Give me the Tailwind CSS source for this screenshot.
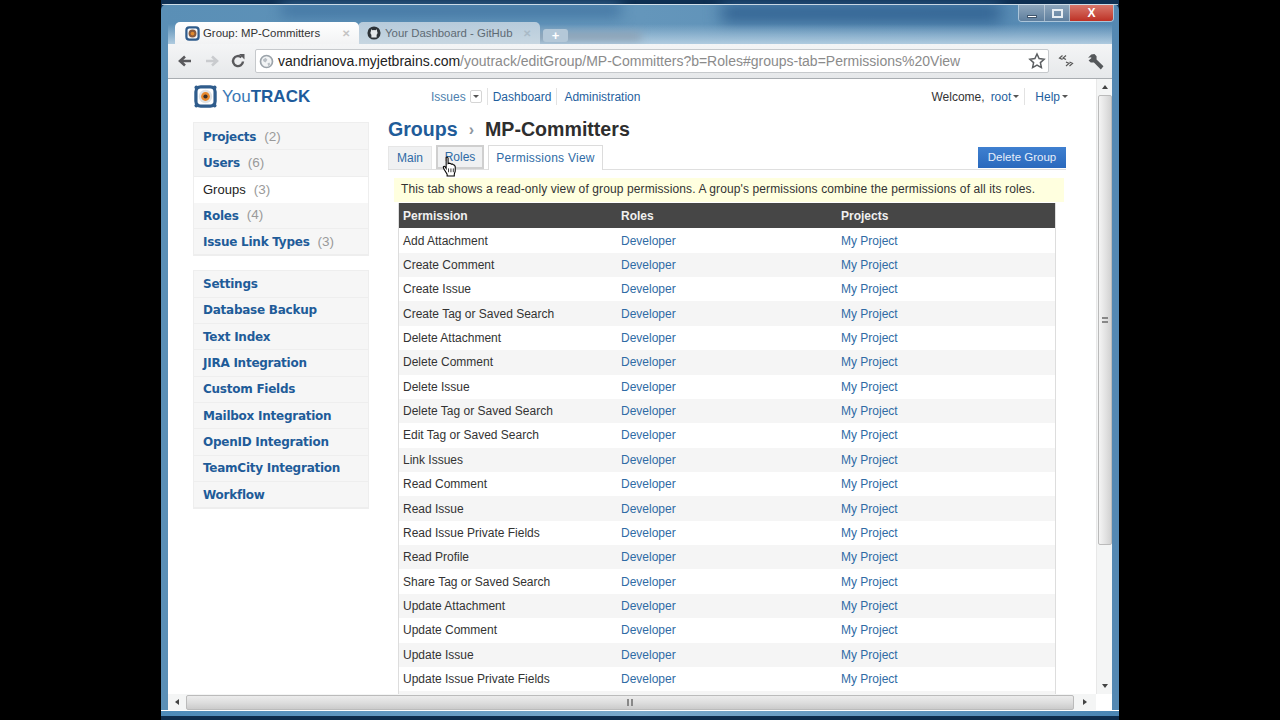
<!DOCTYPE html>
<html>
<head>
<meta charset="UTF-8">
<title>Group: MP-Committers</title>
<script src="https://cdn.jsdelivr.net/npm/@tailwindcss/browser@4"></script>
</head>
<body class="bg-black overflow-hidden font-['Liberation_Sans',sans-serif]">
<div class="w-[1280px] h-[720px] flex">
 <div class="w-[161px] bg-black"></div>
 <!-- window -->
 <div class="relative w-[958px] h-[720px] flex flex-col bg-[#0e2f52] pt-[4px] overflow-hidden">
  <!-- glass -->
  <div class="absolute left-0 right-0 top-[4px] h-[712px] rounded-t-[6px] bg-gradient-to-r from-[#5a8fb6] via-[#6496bb] to-[#5488b2]"></div>
  <div class="absolute left-[120px] top-[4px] w-[340px] h-[12px] bg-[#3f72a0] blur-[7px]"></div>
  <div class="absolute left-[560px] top-[4px] w-[280px] h-[18px] bg-[#2f6090] blur-[8px]"></div>
  <div class="absolute left-[7px] right-[7px] top-[24px] h-[20px] bg-gradient-to-b from-transparent to-[#b9d2e4]/90"></div>
  <div class="absolute left-[240px] top-[33px] w-[240px] h-[7px] bg-[#8d9dae] blur-[4px]"></div>
  <div class="absolute left-[1px] right-[1px] top-[4px] h-[1px] bg-white/70"></div>

  <!-- window buttons -->
  <div class="absolute top-[5px] right-[5px] z-10 h-[17px] flex rounded-b-[4px] overflow-hidden border border-t-0 border-white/50">
   <div class="w-[26px] bg-gradient-to-b from-[#8ea6bc] to-[#5f7f9e] border-r border-white/40 flex items-end justify-center pb-[3px]"><div class="w-[10px] h-[3px] bg-white border border-[#40566d]"></div></div>
   <div class="w-[25px] bg-gradient-to-b from-[#8ea6bc] to-[#5f7f9e] border-r border-white/40 flex items-center justify-center"><div class="w-[11px] h-[9px] bg-transparent border-2 border-[#e8eef3]"></div></div>
   <div class="w-[43px] bg-gradient-to-b from-[#d9766b] to-[#bd2f24] flex items-center justify-center text-white text-[12px] font-bold leading-none">X</div>
  </div>

  <!-- tabs -->
  <div class="relative h-[40px] shrink-0 pt-[18px] pl-[14px] flex items-end text-[11.4px]">
   <div class="relative z-10 w-[184px] h-[22px] bg-gradient-to-b from-white to-[#f2f3f4] rounded-t-[5px] flex items-center pl-[10px] text-[#333]">
    <svg class="w-[15px] h-[15px] mr-[3px] shrink-0" viewBox="0 0 16 16"><rect x="1.5" y="1.5" width="13" height="13" rx="3" fill="none" stroke="#2f5c8c" stroke-width="2.4"/><circle cx="8" cy="8" r="4.2" fill="#8a5a3c"/><circle cx="8" cy="8" r="2" fill="#e08a2e"/></svg>
    <span class="whitespace-nowrap pt-[1px]">Group: MP-Committers</span>
    <span class="ml-[22px] text-[#c4c4c4] font-bold text-[10px]">✕</span>
   </div>
   <div class="w-[182px] h-[22px] -ml-[1px] bg-gradient-to-b from-[#b7cbdb] to-[#c7d6e1] rounded-t-[5px] flex items-center pl-[9px] text-[#5e6a74]">
    <svg class="w-[14px] h-[14px] mr-[4px] shrink-0" viewBox="0 0 16 16"><circle cx="8" cy="8" r="7.5" fill="#2d3338"/><path d="M5 13V10C3.8 9 3.6 6.8 4.6 5.6V3.8L6.4 4.8a5 5 0 0 1 3.2 0L11.4 3.8V5.6C12.4 6.8 12.2 9 11 10V13Z" fill="#e4e8ea"/></svg>
    <span class="whitespace-nowrap pt-[1px]">Your Dashboard - GitHub</span>
    <span class="ml-[11px] text-[#a9bac7] font-bold text-[10px]">✕</span>
   </div>
   <div class="ml-[3px] mb-[2px] w-[25px] h-[13px] rounded-[3px] bg-[#b4c8d8] flex items-center justify-center text-white text-[13px] font-bold leading-none">+</div>
  </div>

  <!-- toolbar -->
  <div class="relative mx-[7px] h-[35px] shrink-0 bg-gradient-to-b from-[#f4f5f6] to-[#e6e8ea] border-b border-[#a9adb1] flex items-center pl-[9px]">
   <svg class="w-[16px] h-[16px] shrink-0" viewBox="0 0 16 16"><path d="M14 8H4M8 3.5L3 8l5 4.5" fill="none" stroke="#59595c" stroke-width="2.6"/></svg>
   <svg class="w-[16px] h-[16px] ml-[11px] shrink-0" viewBox="0 0 16 16"><path d="M2 8H12M8 3.5L13 8l-5 4.5" fill="none" stroke="#c9cbce" stroke-width="2.6"/></svg>
   <svg class="w-[16px] h-[16px] ml-[10px] shrink-0" viewBox="0 0 16 16"><path d="M13 8.5A5 5 0 1 1 11.4 4.4" fill="none" stroke="#59595c" stroke-width="2.4"/><path d="M9 1h5.5v5.5z" fill="#59595c"/></svg>
   <div class="ml-[9px] w-[794px] h-[24px] bg-white border border-[#c6c9cc] rounded-[2px] flex items-center pl-[3px]">
    <svg class="w-[15px] h-[15px] shrink-0" viewBox="0 0 16 16"><circle cx="8" cy="8" r="6.4" fill="#f2f4f5" stroke="#9ba3aa" stroke-width="1.8"/><path d="M4 6l3-2 2 2-2 3-2-1zM9 10l2-1 1 2-2 2z" fill="#b8bec4"/></svg>
    <span class="ml-[4px] text-[14px] whitespace-nowrap text-[#222]">vandrianova.myjetbrains.com<span class="text-[#8b8b8b]">/youtrack/editGroup/MP-Committers?b=Roles#groups-tab=Permissions%20View</span></span>
    <svg class="ml-auto mr-[2px] w-[18px] h-[18px] shrink-0" viewBox="0 0 18 18"><path d="M9 2l2.1 4.6 5 .6-3.7 3.4 1 5L9 13.1l-4.4 2.5 1-5L1.9 7.2l5-.6z" fill="#fff" stroke="#5c5f62" stroke-width="1.5"/></svg>
   </div>
   <svg class="ml-[9px] w-[16px] h-[16px] shrink-0" viewBox="0 0 16 16"><path d="M4.5 2.5L1.5 5l3 1.5M8 2.5L5 5l3 1.5" fill="none" stroke="#555" stroke-width="1.2"/><path d="M8 9l3 1.5L8 13M11.5 9l3 1.5-3 2.5" fill="none" stroke="#555" stroke-width="1.2"/></svg>
   <svg class="ml-[13px] w-[17px] h-[17px] shrink-0" viewBox="0 0 16 16"><path d="M1 4.5L4 1.5 7 1 9 3 9 6 15.5 12.5 13 15.5 6.5 9 3.5 9 1.5 7 4 5 4 4z" fill="#55585b"/></svg>
  </div>

  <!-- content + vertical scrollbar -->
  <div class="relative mx-[7px] flex-1 flex min-h-0 bg-white">
   <div class="flex-1 min-w-0 overflow-hidden">
    <!-- top nav -->
    <div class="h-[43px] flex relative text-[12px] text-[#1f5f9e]">
     <div class="ml-[26px] mt-[5px] flex items-center h-[24px]">
      <svg class="w-[23px] h-[23px]" viewBox="0 0 24 24"><rect x="2" y="2" width="20" height="20" rx="5" fill="none" stroke="#2f5c8c" stroke-width="3.4"/><circle cx="2.5" cy="2.5" r="2" fill="#2f5c8c"/><circle cx="21.5" cy="2.5" r="2" fill="#2f5c8c"/><circle cx="2.5" cy="21.5" r="2" fill="#2f5c8c"/><circle cx="21.5" cy="21.5" r="2" fill="#2f5c8c"/><circle cx="12" cy="12" r="7" fill="#dfe3e6"/><circle cx="12" cy="12" r="4.6" fill="#e8892c"/><circle cx="12" cy="12" r="2.2" fill="#39302a"/></svg>
      <span class="ml-[5px] text-[17px] leading-none text-[#3a78b5]">You<span class="font-bold text-[#1e5c9c]">TRACK</span></span>
     </div>
     <div class="absolute left-[263px] top-[9px] h-[17px] flex items-center">
      <span class="text-[#4d7fae]">Issues</span>
      <span class="ml-[4px] w-[12px] h-[13px] border border-[#d5d5d5] rounded-[2px] flex items-center justify-center"><span class="w-0 h-0 border-x-[3px] border-x-transparent border-t-[3px] border-t-[#555]"></span></span>
      <span class="ml-[5px] mr-[5px] w-px h-[17px] bg-[#e2e2e2]"></span>
      <span>Dashboard</span>
      <span class="ml-[5px] mr-[7px] w-px h-[17px] bg-[#e2e2e2]"></span>
      <span>Administration</span>
     </div>
     <div class="absolute right-[28px] top-[9px] h-[17px] flex items-center">
      <span class="text-[#333]">Welcome,</span>
      <span class="ml-[6px]">root</span>
      <span class="ml-[2px] w-0 h-0 border-x-[3px] border-x-transparent border-t-[3px] border-t-[#555]"></span>
      <span class="ml-[5px] mr-[10px] w-px h-[17px] bg-[#e2e2e2]"></span>
      <span>Help</span>
      <span class="ml-[2px] w-0 h-0 border-x-[3px] border-x-transparent border-t-[3px] border-t-[#555]"></span>
     </div>
    </div>

    <div class="flex">
     <!-- sidebar -->
     <div class="ml-[25px] w-[176px] shrink-0 text-[12px] tracking-[-0.25px] font-['DejaVu_Sans',sans-serif]">
      <div id="side1" class="border border-[#eeeeee] bg-[#f6f6f6] pt-[1px]"></div>
      <div id="side2" class="mt-[14px] border border-[#eeeeee] bg-[#f6f6f6]"></div>
     </div>
     <!-- main -->
     <div class="ml-[19px] w-[678px] shrink-0">
      <div class="h-[15px] flex items-center font-bold text-[19.6px] leading-none">
       <span class="text-[#1f5c99]">Groups</span>
       <span class="mx-[11px] text-[#8c96a0] text-[16px]">›</span>
       <span class="text-[#2e2e2e]">MP-Committers</span>
      </div>
      <div class="mt-[8px] h-[25px] flex items-end text-[12px] border-b border-[#dfdfdf] text-[#2f6ba5]">
       <div class="w-[44px] h-[23px] bg-[#f0f1f2] border border-b-0 border-[#e6e6e6] flex items-center justify-center">Main</div>
       <div class="ml-[4px] w-[48px] h-[24px] bg-[#f0f1f2] border-2 border-[#cfcfcf] flex items-center justify-center">Roles</div>
       <div class="ml-[4px] w-[115px] h-[25px] -mb-px bg-white border border-b-0 border-[#dcdcdc] flex items-center justify-center tracking-[0.25px]">Permissions View</div>
       <div class="ml-auto mb-[1px] w-[88px] h-[21px] bg-gradient-to-b from-[#3f80d0] to-[#2a69bd] text-[#e6eefa] text-[11.5px] flex items-center justify-center">Delete Group</div>
      </div>
      <div class="mt-[8px] mb-[1px] ml-[6px] mr-[2px] h-[24px] bg-[#ffffdf] pb-[2px] pl-[7px] flex items-center text-[12px] text-[#333] whitespace-nowrap tracking-[0.11px]">This tab shows a read-only view of group permissions. A group's permissions combine the permissions of all its roles.</div>
      <div class="ml-[10px] w-[658px] border-l border-r border-[#dddddd]">
       <div class="h-[25.4px] bg-[#464646] text-[#f0f0f0] font-bold text-[12px] flex items-center">
        <span class="pl-[4px] w-[222px]">Permission</span><span class="w-[220px]">Roles</span><span>Projects</span>
       </div>
       <div id="rows"></div>
      </div>
     </div>
    </div>
   </div>

   <!-- vertical scrollbar -->
   <div class="w-[16px] shrink-0 bg-[#f4f5f5] border-l border-[#e8e8e8] flex flex-col items-center">
    <div class="h-[16px] flex items-center justify-center"><span class="w-0 h-0 border-x-[3px] border-x-transparent border-b-[4px] border-b-[#444]"></span></div>
    <div class="w-[14px] h-[450px] bg-gradient-to-r from-[#f4f4f4] via-[#e4e4e4] to-[#d2d2d2] border border-[#bbbbbb] rounded-[2px] flex items-center justify-center"><span class="w-[6px] h-[6px] border-y-2 border-[#888]"></span></div>
    <div class="mt-auto h-[16px] flex items-center justify-center"><span class="w-0 h-0 border-x-[3px] border-x-transparent border-t-[4px] border-t-[#444]"></span></div>
   </div>

   <!-- hand cursor -->
   <svg class="absolute left-[274px] top-[77px] w-[15px] h-[21px] z-20" viewBox="0 0 15 22"><path d="M4 1.5c1 -.8 2 -.3 2 1V8l1 -.5 1.5 .3 1 .7 1.2 0 1.3 1 .8 .2 .7 1.5V16l-1 3v2H5v-2L1.5 13.5 1 11.5c.5 -1 1.5 -1 2 0l1 1.5V2.5z" fill="#fff" stroke="#000" stroke-width="1.1"/><path d="M6.5 13v4M9 13v4M11.5 13v4" stroke="#000" stroke-width=".8"/></svg>
  </div>

  <!-- horizontal scrollbar -->
  <div class="relative mx-[7px] h-[16px] shrink-0 bg-[#f4f5f5] flex items-center">
   <div class="w-[18px] flex justify-center"><span class="w-0 h-0 border-y-[3px] border-y-transparent border-r-[4px] border-r-[#444]"></span></div>
   <div class="w-[888px] h-[15px] bg-gradient-to-b from-[#ececec] via-[#dedede] to-[#cbcbcb] border border-[#bbbbbb] rounded-[2px] flex items-center justify-center"><span class="w-[6px] h-[7px] border-x-2 border-[#888]"></span></div>
   <div class="w-[22px] flex justify-center"><span class="w-0 h-0 border-y-[3px] border-y-transparent border-l-[4px] border-l-[#444]"></span></div>
   <div class="flex-1 h-full bg-white"></div>
  </div>
  <!-- window bottom -->
  <div class="relative h-[6px] shrink-0 bg-gradient-to-r from-[#4d8ab8] via-[#7aa9cb] to-[#4a85b3] border-t border-white"></div>
  <div class="relative h-[4px] shrink-0 bg-[#0d2c4c]"></div>
 </div>
 <div class="flex-1 bg-black"></div>
</div>
<script>
// sidebar lists
const menu1 = [["Projects", 2], ["Users", 6], ["Groups", 3], ["Roles", 4], ["Issue Link Types", 3]];
const menu2 = ["Settings", "Database Backup", "Text Index", "JIRA Integration", "Custom Fields", "Mailbox Integration", "OpenID Integration", "TeamCity Integration", "Workflow"];

document.getElementById("side1").innerHTML = menu1.map(([name, n]) => {
 const active = name === "Groups";
 return `<div class="h-[26.3px] pl-[9px] flex items-center whitespace-nowrap ${active ? "bg-white" : "border-b border-[#eeeeee]"}">
  <span class="${active ? "font-['Liberation_Sans'] text-[13px] tracking-normal text-[#222]" : "font-bold text-[#1f5c99]"}">${name}</span>
  <span class="ml-[8px] font-['Liberation_Sans'] text-[13.5px] tracking-normal text-[#9a9a9a]">(${n})</span>
 </div>`;
}).join("");

document.getElementById("side2").innerHTML = menu2.map(name =>
 `<div class="h-[26.3px] pl-[9px] flex items-center whitespace-nowrap border-b border-[#eeeeee] font-bold text-[#1f5c99]">${name}</div>`
).join("");

// permission table, the blank last row is cut off by the scrollbar
const perms = ["Add Attachment", "Create Comment", "Create Issue", "Create Tag or Saved Search", "Delete Attachment", "Delete Comment", "Delete Issue", "Delete Tag or Saved Search", "Edit Tag or Saved Search", "Link Issues", "Read Comment", "Read Issue", "Read Issue Private Fields", "Read Profile", "Share Tag or Saved Search", "Update Attachment", "Update Comment", "Update Issue", "Update Issue Private Fields"];

document.getElementById("rows").innerHTML = perms.map((p, i) =>
 `<div class="h-[24.36px] flex items-center text-[12px] ${i % 2 ? "bg-[#f5f5f5]" : "bg-white"}">
  <span class="pl-[4px] w-[222px] text-[#333]">${p}</span>
  <span class="w-[220px] text-[#2f6ba5]">Developer</span>
  <span class="text-[#2f6ba5]">My Project</span>
 </div>`
).join("") + `<div class="h-[24.36px] bg-[#f5f5f5]"></div>`;
</script>
</body>
</html>
